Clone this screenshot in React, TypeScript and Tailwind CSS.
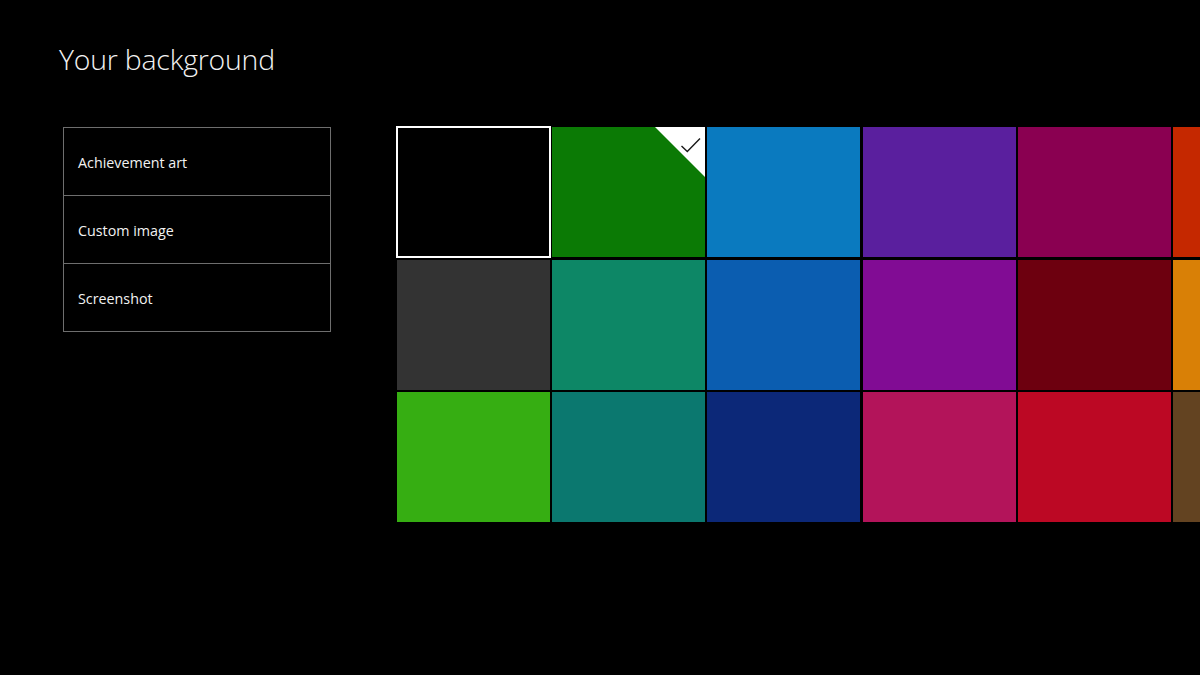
const tiles: string[] = [
  "bg-[#000000]",
  "bg-[#0b7a05]",
  "bg-[#0a7abf]",
  "bg-[#5a1f9e]",
  "bg-[#8a0051]",
  "bg-[#c52800]",
  "bg-[#333333]",
  "bg-[#0d8766]",
  "bg-[#0b5db0]",
  "bg-[#810c94]",
  "bg-[#6d000f]",
  "bg-[#d98006]",
  "bg-[#36ae12]",
  "bg-[#0b786f]",
  "bg-[#0c2878]",
  "bg-[#b3145a]",
  "bg-[#bc0824]",
  "bg-[#634321]",
];

const options = ["Achievement art", "Custom image", "Screenshot"];

export default function App() {
  return (
    <div className="w-[1200px] h-[675px] bg-black overflow-hidden font-['Open_Sans','Noto_Sans',sans-serif] text-[#f2f2f2]">
      <h1 className="pl-[59px] pt-[41px] text-[28.4px] leading-[36px] font-light tracking-[-0.2px]">
        Your background
      </h1>

      <div className="flex mt-[50px]">
        {/* source list */}
        <div className="ml-[63px] w-[268px] h-[205px] shrink-0 border border-[#6e6e6e] flex flex-col">
          {options.map((o, i) => (
            <div
              key={o}
              className={`flex-1 flex items-center pl-[14px] pt-[3px] text-[14.3px] ${i > 0 ? "border-t border-[#6e6e6e]" : ""}`}
            >
              {o}
            </div>
          ))}
        </div>

        {/* colour grid */}
        <div className="ml-[66px] grid grid-cols-[repeat(6,153px)] grid-rows-[repeat(3,130px)] gap-x-[2.2px] gap-y-[2.6px] shrink-0">
          {tiles.map((c, i) => (
            <div
              key={i}
              className={`relative ${c} ${i === 0 ? "outline-2 outline-white outline-offset-[-1px]" : ""}`}
            >
              {i === 1 && (
                <svg className="absolute top-0 right-0" width="50" height="50" viewBox="0 0 50 50">
                  <polygon points="0,0 50,0 50,50" fill="#fff" />
                  <polyline
                    points="26.5,19 32.3,24.5 45,11.5"
                    fill="none"
                    stroke="#1a1a1a"
                    strokeWidth="1.4"
                  />
                </svg>
              )}
            </div>
          ))}
        </div>
      </div>
    </div>
  );
}
